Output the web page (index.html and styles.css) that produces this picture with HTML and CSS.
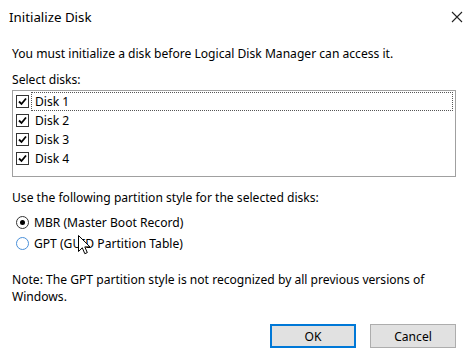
FILE: index.html
```html
<!DOCTYPE html>
<html>
<head>
<meta charset="utf-8">
<link rel="stylesheet" href="styles.css">
</head>
<body>
<div class="dialog">
  <div class="titlebar">
    <span class="title">Initialize Disk</span>
    <svg class="close" width="12" height="12" viewBox="0 0 12 12"><path d="M1 1L11 11M11 1L1 11" stroke="#222" stroke-width="1.1" fill="none"/></svg>
  </div>
  <div class="content">
    <p class="line intro">You must initialize a disk before Logical Disk Manager can access it.</p>
    <p class="line select">Select disks:</p>
    <div class="listbox">
      <div class="row focus"><span class="cb"><svg width="9" height="9" viewBox="0 0 9 9"><path d="M1 4.5L3.5 7L8 1.5" stroke="#000" stroke-width="1.8" fill="none"/></svg></span><span>Disk 1</span></div>
      <div class="row"><span class="cb"><svg width="9" height="9" viewBox="0 0 9 9"><path d="M1 4.5L3.5 7L8 1.5" stroke="#000" stroke-width="1.8" fill="none"/></svg></span><span>Disk 2</span></div>
      <div class="row"><span class="cb"><svg width="9" height="9" viewBox="0 0 9 9"><path d="M1 4.5L3.5 7L8 1.5" stroke="#000" stroke-width="1.8" fill="none"/></svg></span><span>Disk 3</span></div>
      <div class="row"><span class="cb"><svg width="9" height="9" viewBox="0 0 9 9"><path d="M1 4.5L3.5 7L8 1.5" stroke="#000" stroke-width="1.8" fill="none"/></svg></span><span>Disk 4</span></div>
    </div>
    <p class="line use">Use the following partition style for the selected disks:</p>
    <div class="radio first"><span class="rb checked"></span><span>MBR (Master Boot Record)</span></div>
    <div class="radio"><span class="rb blue"></span><span>GPT (GUID Partition Table)</span></div>
    <p class="note">Note: The GPT partition style is not recognized by all previous versions of Windows.</p>
    <div class="buttons">
      <button class="btn default">OK</button>
      <button class="btn">Cancel</button>
    </div>
  </div>
  <svg class="cursor" width="13" height="20" viewBox="0 0 13 20"><path d="M0.5 0.5V16.5L4.3 12.8L6.8 18.7L9.3 17.6L6.8 11.9H12L0.5 0.5Z" fill="#fff" stroke="#000" stroke-width="1" stroke-linejoin="miter"/></svg>
</div>
</body>
</html>
```
FILE: styles.css
```css
html, body {
  margin: 0;
  padding: 0;
  background: #fff;
}
.dialog {
  position: relative;
  width: 474px;
  height: 363px;
  background: #fff;
  font-family: "Noto Sans", "DejaVu Sans", sans-serif;
  font-size: 12.1px;
  color: #000;
  overflow: hidden;
}
.titlebar {
  height: 33px;
  display: flex;
  align-items: center;
  justify-content: space-between;
  padding: 0 11px 0 9px;
}
.title {
  font-size: 13.3px;
  color: #000;
}
.close {
  display: block;
}
.content {
  padding: 0 18px 0 12px;
}
.line {
  margin: 0;
  line-height: 16px;
}
.intro {
  margin-top: 13px;
}
.select {
  margin-top: 10px;
}
.listbox {
  margin-top: 2px;
  height: 84px;
  border: 1px solid #a0a0a0;
  padding-top: 1px;
  box-sizing: content-box;
}
.row {
  height: 19px;
  display: flex;
  align-items: center;
  position: relative;
}
.row span:last-child {
  margin-left: 5px;
  padding: 0 1px;
}
.row.focus::after {
  content: "";
  position: absolute;
  left: 18px;
  right: 2px;
  top: 0;
  bottom: 0;
  border: 1px dotted #555;
}
.cb {
  width: 11px;
  height: 11px;
  border: 1px solid #333;
  margin-left: 3px;
  display: flex;
  align-items: center;
  justify-content: center;
  background: #fff;
}
.use {
  margin-top: 13px;
}
.radio {
  display: flex;
  align-items: center;
  height: 21px;
}
.radio.first {
  margin-top: 6px;
}
.rb {
  width: 11px;
  height: 11px;
  border: 1px solid #333;
  border-radius: 50%;
  margin-left: 4px;
  margin-right: 5px;
  position: relative;
  box-sizing: content-box;
}
.rb.blue {
  border-color: #4a90d9;
}
.rb.checked::after {
  content: "";
  position: absolute;
  left: 3px;
  top: 3px;
  width: 5px;
  height: 5px;
  border-radius: 50%;
  background: #000;
}
.note {
  margin: 17px 0 0;
  line-height: 17px;
  width: 440px;
}
.buttons {
  display: flex;
  justify-content: flex-end;
  gap: 14px;
  margin-top: 19px;
}
.btn {
  width: 86px;
  height: 24px;
  font-family: inherit;
  font-size: 12.1px;
  background: #e1e1e1;
  border: 1px solid #adadad;
  padding: 0;
  color: #000;
}
.btn.default {
  border: 2px solid #0078d7;
}
.cursor {
  position: absolute;
  left: 78px;
  top: 235px;
}
```
